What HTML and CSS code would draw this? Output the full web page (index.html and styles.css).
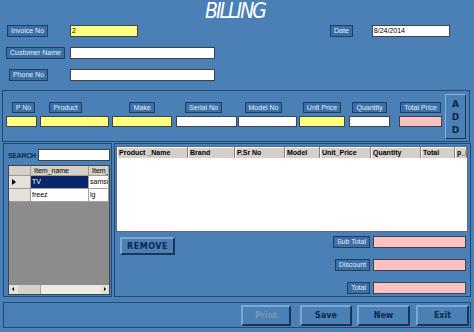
FILE: index.html
```html
<html>
  <head>
    <title>Billing</title>
    <link rel="stylesheet" href="styles.css">
  </head>
  <body>
    <div class="app">
      <div class="top">
        <div class="title">BILLING</div>
        <div class="top-row first">
          <div class="lbl-cell"><span class="lbl lbl-inv">Invoice No</span></div>
          <input class="fld yellow w-inv" value="2">
          <span class="lbl lbl-date">Date</span>
          <input class="fld w-date" value="8/24/2014">
        </div>
        <div class="top-row">
          <div class="lbl-cell"><span class="lbl lbl-cust">Customer Name</span></div>
          <input class="fld w-long" value="">
        </div>
        <div class="top-row">
          <div class="lbl-cell"><span class="lbl lbl-phone">Phone No</span></div>
          <input class="fld w-long" value="">
        </div>
      </div>

      <div class="prod">
        <div class="pcol c1"><span class="lbl">P No</span><input class="fld yellow"></div>
        <div class="pcol c2"><span class="lbl">Product</span><input class="fld yellow"></div>
        <div class="pcol c3"><span class="lbl">Make</span><input class="fld yellow"></div>
        <div class="pcol c4"><span class="lbl">Serial No</span><input class="fld"></div>
        <div class="pcol c5"><span class="lbl">Model No</span><input class="fld"></div>
        <div class="pcol c6"><span class="lbl">Unit Price</span><input class="fld yellow"></div>
        <div class="pcol c7"><span class="lbl">Quantity</span><input class="fld"></div>
        <div class="pcol c8"><span class="lbl">Total Price</span><input class="fld pink"></div>
        <div class="add"><span>A</span><span>D</span><span>D</span></div>
      </div>

      <div class="mid">
        <div class="left">
          <div class="search">
            <span class="search-lbl">SEARCH</span>
            <input class="fld search-fld">
          </div>
          <div class="lgrid">
            <div class="lg-head">
              <div class="lg-c"></div>
              <div class="lg-c">Item_name</div>
              <div class="lg-c">Item_n</div>
            </div>
            <div class="lg-row">
              <div class="lg-rh"><span class="cur"></span></div>
              <div class="lg-d sel">TV</div>
              <div class="lg-d">samsu</div>
            </div>
            <div class="lg-row">
              <div class="lg-rh"></div>
              <div class="lg-d">freez</div>
              <div class="lg-d">lg</div>
            </div>
            <div class="lg-fill"></div>
            <div class="hscroll">
              <div class="sb-btn"><span class="tri-l"></span></div>
              <div class="sb-thumb"></div>
              <div class="sb-btn sb-end"><span class="tri-r"></span></div>
            </div>
          </div>
        </div>

        <div class="right">
          <div class="rgrid">
            <div class="rg-head">
              <div class="rg-c">Product _Name</div>
              <div class="rg-c">Brand</div>
              <div class="rg-c">P.Sr No</div>
              <div class="rg-c">Model</div>
              <div class="rg-c">Unit_Price</div>
              <div class="rg-c">Quantity</div>
              <div class="rg-c">Total</div>
              <div class="rg-c">p_r</div>
            </div>
          </div>
          <div class="rbottom">
            <div class="btn remove">REMOVE</div>
            <div class="totals">
              <div class="trow"><span class="lbl">Sub Total</span><input class="fld pink w-tot"></div>
              <div class="trow"><span class="lbl">Discount</span><input class="fld pink w-tot"></div>
              <div class="trow"><span class="lbl">Total</span><input class="fld pink w-tot"></div>
            </div>
          </div>
        </div>
      </div>

      <div class="bottom">
        <div class="btn b-print">Print</div>
        <div class="btn b-save">Save</div>
        <div class="btn b-new">New</div>
        <div class="btn b-exit">Exit</div>
      </div>
    </div>
  </body>
</html>
```

FILE: styles.css
```css
body { margin: 0; }
.app {
  width: 474px;
  height: 332px;
  background: #4a80b6;
  font-family: "Liberation Sans", Arial, sans-serif;
  font-size: 7px;
  overflow: hidden;
}

/* header area */
.top { height: 90px; box-sizing: border-box; }
.title {
  height: 22px;
  padding-right: 4px;
  text-align: center;
  color: #fff;
  font: italic 21px/22px "DejaVu Sans", sans-serif;
  font-stretch: condensed;
  letter-spacing: -2px;
}
.top-row { display: flex; align-items: center; height: 13px; margin-top: 9px; }
.top-row.first { margin-top: 2px; }
.lbl-cell { width: 70px; flex: none; }
.lbl-inv { margin-left: 7px; }
.lbl-cust { margin-left: 6px; }
.lbl-phone { margin-left: 9px; }
.lbl-date { margin-left: 192px; }

.lbl {
  display: inline-block;
  box-sizing: border-box;
  height: 12px;
  line-height: 10px;
  padding: 0 3px;
  background: #3b70a6;
  border: 1px solid #1d3e66;
  color: #e4edf7;
  white-space: nowrap;
}
.fld {
  display: block;
  box-sizing: border-box;
  height: 12px;
  min-width: 0;
  margin: 0;
  padding: 0 1px;
  border: 1px solid #3a4350;
  background: #fff;
  color: #000;
  font: 7px "Liberation Sans", Arial, sans-serif;
  outline: none;
}
.yellow { background: #ffff80; }
.pink { background: #ffc0c0; }
.w-inv { width: 68px; }
.w-date { width: 78px; margin-left: 19px; }
.w-long { width: 145px; }

/* product entry panel */
.prod {
  margin-left: 2px;
  width: 468px;
  height: 52px;
  box-sizing: border-box;
  border: 1px solid #1f4a76;
  display: flex;
  padding: 3px 0 0 3px;
}
.pcol { display: flex; flex-direction: column; align-items: center; padding-top: 8px; flex: none; }
.pcol .lbl { height: 11px; line-height: 9px; margin-bottom: 3px; }
.pcol .fld { height: 11px; width: 100%; }
.c1 { width: 31px; }
.c1 .lbl { margin-left: 4px; }
.c2 { width: 69px; margin-left: 3px; }
.c2 .lbl { margin-right: 18px; }
.c3 { width: 60px; margin-left: 3px; }
.c4 { width: 61px; margin-left: 4px; }
.c4 .lbl { margin-right: 6px; }
.c5 { width: 59px; margin-left: 1px; }
.c5 .lbl { margin-right: 8px; }
.c6 { width: 46px; margin-left: 2px; }
.c7 { width: 41px; margin-left: 4px; }
.c8 { width: 43px; margin-left: 9px; }
.add {
  margin-left: 3px;
  width: 21px;
  height: 45px;
  box-sizing: border-box;
  border: 1px solid;
  border-color: #8bb0d8 #16365a #16365a #8bb0d8;
  display: flex;
  flex-direction: column;
  align-items: center;
  justify-content: space-around;
  padding: 2px 0;
  font: bold 9px "DejaVu Sans", sans-serif;
  color: #0e2547;
}

/* middle */
.mid { display: flex; padding-left: 3px; margin-top: 1px; height: 154px; }
.left {
  width: 109px;
  box-sizing: border-box;
  border: 1px solid #1f4a76;
  padding: 5px 1px 1px 4px;
  display: flex;
  flex-direction: column;
}
.search { display: flex; align-items: center; height: 12px; }
.search-lbl { width: 30px; flex: none; font: bold 7px "Liberation Sans", Arial, sans-serif; color: #0d2b52; letter-spacing: -0.3px; }
.search-fld { flex: 1; width: 0; }

.lgrid {
  margin-top: 4px;
  flex: 1;
  border: 1px solid #3c4650;
  background: #8c8c8c;
  display: flex;
  flex-direction: column;
  overflow: hidden;
}
.lg-head, .lg-row { display: grid; grid-template-columns: 22px 58px 20px; flex: none; }
.lg-head { height: 10px; background: #d4d0c8; }
.lg-c { border-right: 1px solid #a09c94; border-bottom: 1px solid #a09c94; padding-left: 3px; line-height: 9px; white-space: nowrap; overflow: hidden; }
.lg-row { height: 13px; }
.lg-rh { background: #e4e1da; border-right: 1px solid #a09c94; border-bottom: 1px solid #a09c94; position: relative; }
.cur {
  position: absolute;
  left: 3px;
  top: 3px;
  border-left: 4px solid #000;
  border-top: 3px solid transparent;
  border-bottom: 3px solid transparent;
}
.lg-d { background: #fff; border-right: 1px solid #a0a0a0; border-bottom: 1px solid #a0a0a0; padding-left: 1px; line-height: 12px; white-space: nowrap; overflow: hidden; }
.lg-d.sel { background: #0a246a; color: #fff; }
.lg-fill { flex: 1; }
.hscroll { height: 9px; display: flex; background: #eeebe5; flex: none; }
.sb-btn { width: 8px; position: relative; background: #e4e0d8; }
.sb-end { margin-left: auto; }
.sb-thumb { width: 22px; margin-left: 1px; background: #d6d2ca; border-right: 1px solid #a8a49c; }
.tri-l, .tri-r { position: absolute; top: 2px; border-top: 2px solid transparent; border-bottom: 2px solid transparent; }
.tri-l { left: 3px; border-right: 2px solid #000; }
.tri-r { left: 3px; border-left: 2px solid #000; }

.right {
  margin-left: 2px;
  width: 357px;
  box-sizing: border-box;
  border: 1px solid #1f4a76;
  padding: 2px 1px 0 1px;
}
.rgrid { width: 352px; height: 86px; box-sizing: border-box; background: #fff; border: 1px solid #5a6a7a; }
.rg-head { display: grid; grid-template-columns: 71px 47px 50px 35px 51px 50px 34px 1fr; height: 11px; }
.rg-c {
  background: #d4d0c8;
  border-right: 1px solid #808080;
  box-shadow: inset 1px 1px 0 #fff;
  font-weight: bold;
  padding-left: 2px;
  line-height: 11px;
  white-space: nowrap;
  overflow: hidden;
}
.rbottom { display: flex; justify-content: space-between; }
.totals { display: flex; flex-direction: column; align-items: flex-end; gap: 11px; margin: 4px 3px 0 0; }
.trow { display: flex; align-items: center; }
.w-tot { width: 93px; margin-left: 3px; }

/* buttons */
.btn {
  box-sizing: border-box;
  border: 2px solid;
  border-color: #7ea6d0 #17365a #17365a #7ea6d0;
  display: flex;
  align-items: center;
  justify-content: center;
  font: bold 8px "DejaVu Sans", sans-serif;
  color: #0d2748;
}
.remove { width: 55px; height: 18px; margin: 5px 0 0 4px; letter-spacing: 0.5px; }

.bottom {
  margin: 5px 0 0 3px;
  width: 468px;
  height: 26px;
  box-sizing: border-box;
  border: 1px solid #1f4a76;
  display: flex;
  justify-content: flex-end;
  padding: 2px 1px 0 0;
}
.bottom .btn { height: 21px; }
.b-print { width: 50px; color: #7e96b2; }
.b-save { width: 52px; margin-left: 9px; }
.b-new { width: 53px; margin-left: 5px; }
.b-exit { width: 53px; margin-left: 6px; }
```
